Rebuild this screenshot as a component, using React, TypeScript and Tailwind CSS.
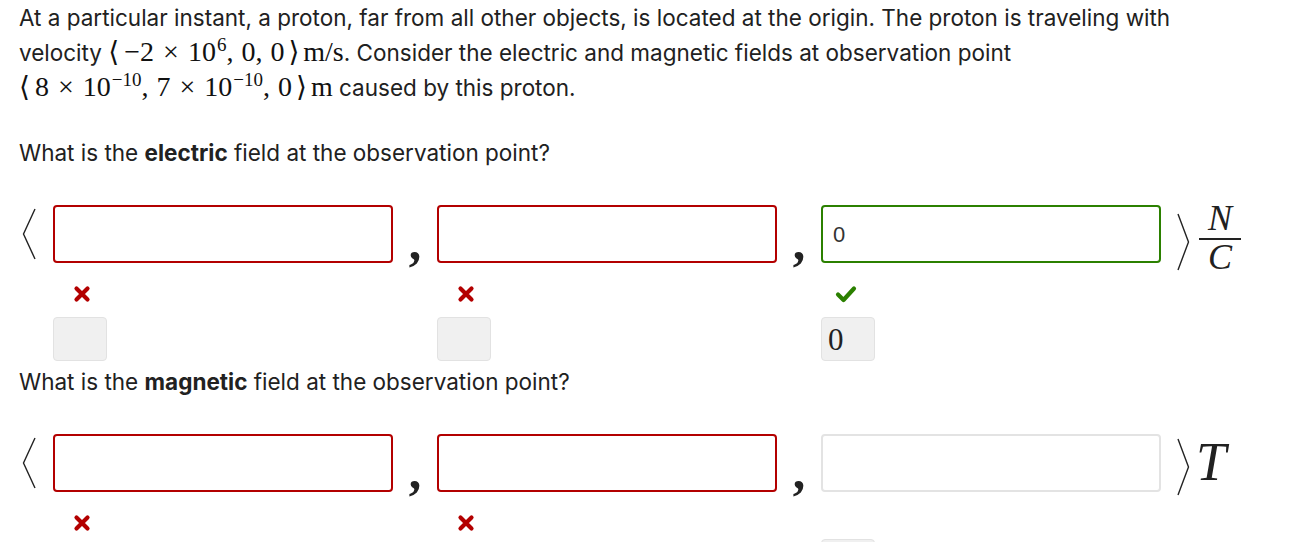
import React from "react";

const serif = { fontFamily: '"Liberation Serif", "DejaVu Serif", serif' };

const Cross = () => (
  <svg width="18" height="18" viewBox="0 0 18 18">
    <path d="M3.5 3.5 L14.5 14.5 M14.5 3.5 L3.5 14.5" stroke="#b30000" strokeWidth="4.2" strokeLinecap="round" />
  </svg>
);

const Check = () => (
  <svg width="22" height="18" viewBox="0 0 22 18">
    <path d="M3 9.5 L8.5 15 L19 3.5" fill="none" stroke="#2b8000" strokeWidth="4.2" strokeLinecap="round" strokeLinejoin="round" />
  </svg>
);

const LAngle = () => (
  <div className="w-[34px] shrink-0">
    <svg width="34" height="62" viewBox="0 0 34 62" className="block">
      <polyline points="16,4 4.5,29 16,54" fill="none" stroke="#222" strokeWidth="1.4" />
    </svg>
  </div>
);

const RAngle = ({ top }: { top: string }) => (
  <div className={`ml-[15px] shrink-0 ${top}`}>
    <svg width="14" height="60" viewBox="0 0 14 60" className="block">
      <polyline points="2,1 12.5,29 2,57" fill="none" stroke="#222" strokeWidth="1.4" />
    </svg>
  </div>
);

const Comma = () => (
  <div className="w-[44px] shrink-0 flex justify-center">
    <span className="text-[50px] leading-none pt-[12px] font-bold text-[#222]" style={serif}>
      ,
    </span>
  </div>
);

const Times = () => <span className="mx-[9px]">×</span>;
const Sep = () => <span className="mr-[8px]">,</span>;
const Sup = ({ children }: { children: React.ReactNode }) => (
  <sup className="text-[19px] relative top-[-10px] ml-[1px]">{children}</sup>
);
const LA = () => <span className="mr-[5px]">⟨</span>;
const RA = () => <span className="mx-[4px]">⟩</span>;

type ColProps = {
  state: "wrong" | "right" | "empty";
  value?: string;
  answer?: string | null;
  noIcon?: boolean;
};

const Col = ({ state, value, answer, noIcon }: ColProps) => {
  const border =
    state === "wrong"
      ? "border-[#b30000]"
      : state === "right"
      ? "border-[#2b8000]"
      : "border-[#e3e3e3]";
  return (
    <div className="w-[340px] shrink-0 flex flex-col">
      <div
        className={`h-[58px] w-[340px] rounded-[4px] border-2 ${border} bg-white flex items-center pl-[10px] text-[22px] text-[#333]`}
        style={{ fontFamily: '"Liberation Sans", Arial, sans-serif' }}
      >
        {value}
      </div>
      {noIcon ? null : (
        <div className={`mt-[22px] h-[18px] ${state === "right" ? "pl-[14px]" : "pl-[20px]"}`}>
          {state === "right" ? <Check /> : <Cross />}
        </div>
      )}
      {answer !== null && (
        <div
          className={`${noIcon ? "mt-[47px]" : "mt-[14px]"} h-[44px] w-[54px] rounded-[4px] border border-[#e2e2e2] bg-[#f0f0f0] flex items-center pl-[6px] text-[31px] text-[#222]`}
          style={serif}
        >
          {answer}
        </div>
      )}
    </div>
  );
};

export default function App() {
  return (
    <div
      className="bg-white min-h-screen pl-[19px] text-[22.5px] leading-[35px] text-[#212121]"
      style={{ fontFamily: 'Inter, "Noto Sans", sans-serif' }}
    >
      <p>
        At a particular instant, a proton, far from all other objects, is located at the origin. The proton is traveling with
        <br />
        velocity{" "}
        <span className="text-[28px] leading-[20px] text-[#111]" style={serif}>
          <LA />−2<Times />10<Sup>6</Sup><Sep />0<Sep />0<RA />m/s
        </span>
        . Consider the electric and magnetic fields at observation point
        <br />
        <span className="text-[28px] leading-[20px] text-[#111]" style={serif}>
          <LA />8<Times />10<Sup>−10</Sup><Sep />7<Times />10<Sup>−10</Sup><Sep />0<RA />m
        </span>{" "}
        caused by this proton.
      </p>

      <p className="mt-[30px]">
        What is the <b className="font-bold">electric</b> field at the observation point?
      </p>

      <div className="mt-[35px] flex items-start">
        <LAngle />
        <Col state="wrong" answer="" />
        <Comma />
        <Col state="wrong" answer="" />
        <Comma />
        <Col state="right" value="0" answer="0" />
        <RAngle top="mt-[8px]" />
        <div className="ml-[8px] flex flex-col items-center w-[44px]" style={serif}>
          <span className="italic text-[36px] leading-[30px] mt-[-2px]">N</span>
          <div className="h-[2px] w-[42px] bg-[#222] mt-[5px]" />
          <span className="italic text-[36px] leading-[30px] mt-[2px]">C</span>
        </div>
      </div>

      <p className="mt-[3px]">
        What is the <b className="font-bold">magnetic</b> field at the observation point?
      </p>

      <div className="mt-[35px] flex items-start">
        <LAngle />
        <Col state="wrong" answer="" />
        <Comma />
        <Col state="wrong" answer="" />
        <Comma />
        <Col state="empty" answer="" noIcon />
        <RAngle top="mt-[4px]" />
        <span className="italic text-[54px] leading-[52px] ml-[6px] mt-[2px]" style={serif}>
          T
        </span>
      </div>
    </div>
  );
}
